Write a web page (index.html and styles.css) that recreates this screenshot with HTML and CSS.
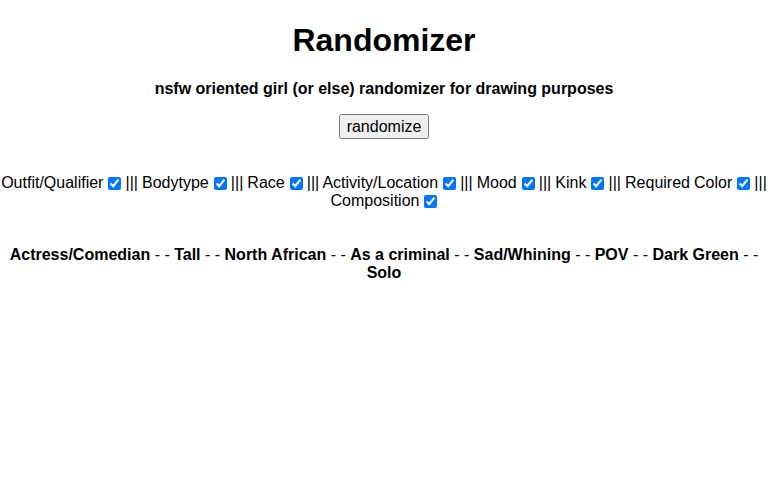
FILE: index.html
```html
<!DOCTYPE html>
<html lang="en">
<head>
<meta charset="utf-8">
<title>Randomizer</title>
<link rel="stylesheet" href="styles.css">
</head>
<body>
<main class="page">
  <h1 class="title">Randomizer</h1>
  <p class="tagline"><b>nsfw oriented girl (or else) randomizer for drawing purposes</b></p>
  <p class="actions"><button class="roll" type="button">randomize</button></p>
  <div class="options">Outfit/Qualifier <input type="checkbox" checked> ||| Bodytype <input type="checkbox" checked> ||| Race <input type="checkbox" checked> ||| Activity/Location <input type="checkbox" checked> ||| Mood <input type="checkbox" checked> ||| Kink <input type="checkbox" checked> ||| Required Color <input type="checkbox" checked> ||| Composition <input type="checkbox" checked></div>
  <div class="result"><b>Actress/Comedian</b> - - <b>Tall</b> - - <b>North African</b> - - <b>As a criminal</b> - - <b>Sad/Whining</b> - - <b>POV</b> - - <b>Dark Green</b> - - <b>Solo</b></div>
</main>
</body>
</html>
```
FILE: styles.css
```css
html, body {
  margin: 0;
  padding: 0;
  background: #fff;
}

.page {
  font-family: "Liberation Sans", Arial, sans-serif;
  font-size: 16px;
  color: #000;
  text-align: center;
}

.title {
  font-size: 32px;
  font-weight: bold;
  margin: 22px 0 21px;
}

.tagline {
  margin: 0 0 16px;
}

.actions {
  margin: 0 0 35px;
}

.roll {
  font-family: "Liberation Sans", Arial, sans-serif;
  font-size: 16px;
  padding: 2px 6px 1px;
}

.options {
  margin: 0 0 36px;
  line-height: 18px;
  word-spacing: -0.4px;
}

.options input {
  width: 13px;
  height: 13px;
  margin: 0 0 0 1px;
  vertical-align: -2px;
}

.result {
  margin: 0;
  line-height: 18px;
}
```
